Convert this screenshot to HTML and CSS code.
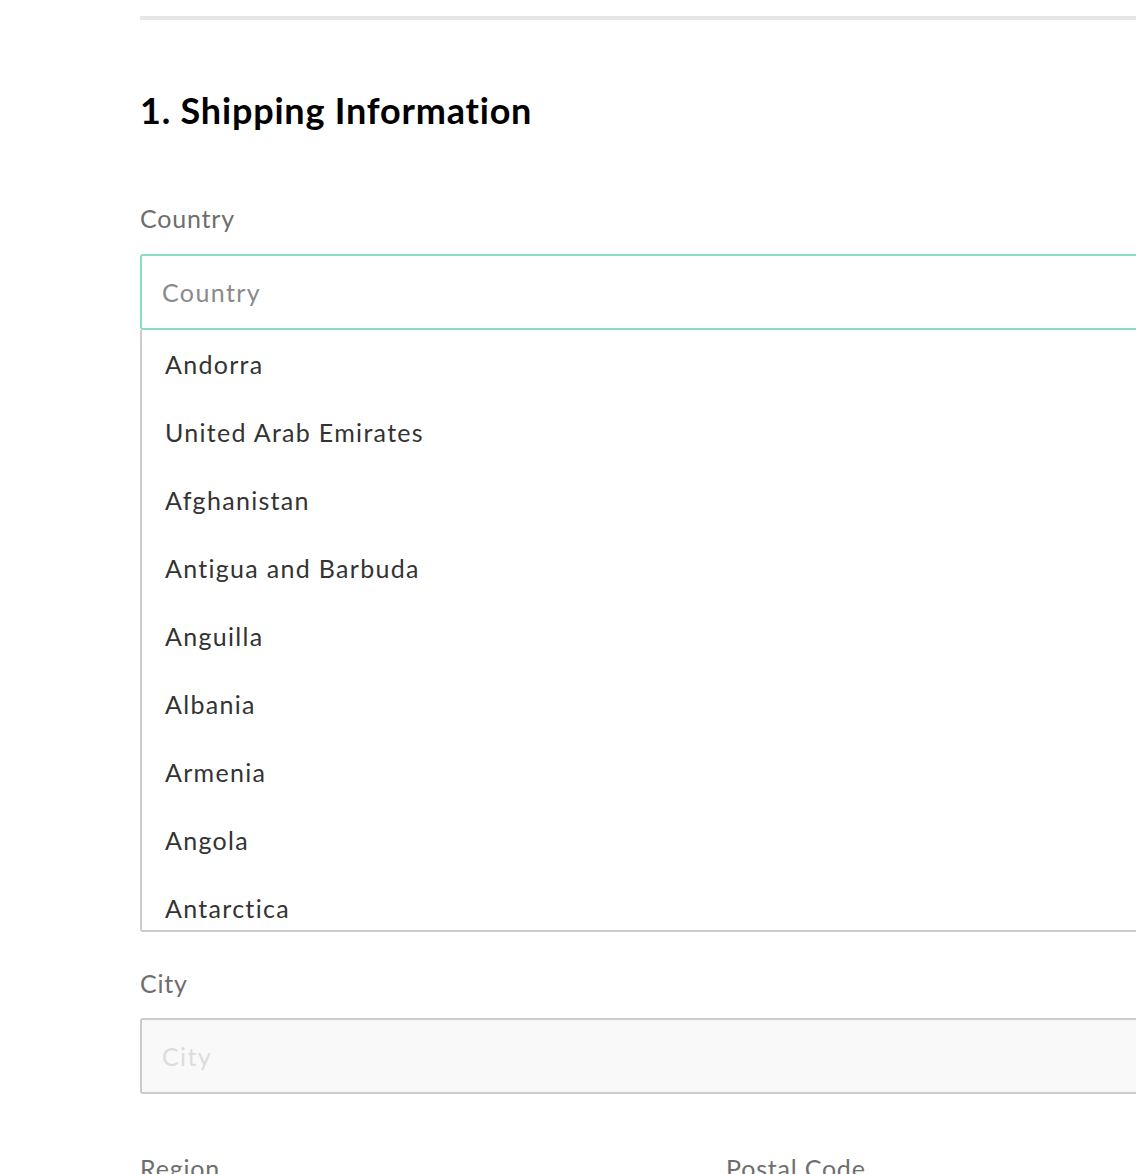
FILE: index.html
```html
<!DOCTYPE html>
<html lang="en">
<head>
<meta charset="utf-8">
<title>Shipping Information</title>
<link rel="stylesheet" href="styles.css">
</head>
<body>
<div class="page">
  <form class="form">
    <h2 class="title">1. Shipping Information</h2>
    <label class="label" for="country">Country</label>
    <div class="combo">
      <input class="input input-active" id="country" type="text" placeholder="Country">
      <ul class="options">
        <li class="option">Andorra</li>
        <li class="option">United Arab Emirates</li>
        <li class="option">Afghanistan</li>
        <li class="option">Antigua and Barbuda</li>
        <li class="option">Anguilla</li>
        <li class="option">Albania</li>
        <li class="option">Armenia</li>
        <li class="option">Angola</li>
        <li class="option">Antarctica</li>
        <li class="option">Argentina</li>
      </ul>
    </div>
    <label class="label label-city" for="city">City</label>
    <input class="input input-disabled" id="city" type="text" placeholder="City" disabled>
    <div class="row">
      <div class="col"><label class="label">Region</label></div>
      <div class="col"><label class="label">Postal Code</label></div>
    </div>
  </form>
</div>
</body>
</html>
```
FILE: styles.css
```css
html, body {
  margin: 0;
  padding: 0;
  background: #ffffff;
  overflow: hidden;
}
body {
  font-family: Lato, "Open Sans", sans-serif;
}
.page {
  padding: 16px 0 0 140px;
}
.form {
  width: 1152px;
  border-top: 4px solid #e6e6e6;
  margin: 0;
}
.title {
  margin: 68px 0 0 0;
  font-size: 36px;
  line-height: 44px;
  font-weight: 700;
  letter-spacing: 0.8px;
  color: #000;
}
.label {
  display: block;
  margin-top: 71px;
  font-size: 25px;
  line-height: 30px;
  letter-spacing: 0.8px;
  color: #6e6e6e;
}
.combo {
  margin-top: 21px;
}
.input {
  display: block;
  box-sizing: border-box;
  width: 100%;
  height: 76px;
  margin: 0;
  padding: 0 20px;
  border: 2px solid #cccccc;
  border-radius: 3px;
  font-family: inherit;
  font-size: 25px;
  letter-spacing: 1.4px;
  color: #333;
  outline: none;
  background: #fff;
}
.input-active {
  border-color: #8adcc5;
}
.input-active::placeholder {
  color: #8a8a8a;
}
.input-disabled {
  margin-top: 20px;
  background: #f9f9f9;
}
.input-disabled::placeholder {
  color: #dcdcdc;
}
.options {
  list-style: none;
  margin: 0;
  padding: 0;
  height: 602px;
  box-sizing: border-box;
  overflow: hidden;
  border: 2px solid #cccccc;
  border-top: none;
  border-radius: 0 0 3px 3px;
}
.option {
  height: 68px;
  line-height: 68px;
  padding-left: 23px;
  font-size: 25px;
  color: #333;
  letter-spacing: 1.3px;
}
.label-city {
  margin-top: 36px;
}
.row {
  display: grid;
  grid-template-columns: 566px 566px;
  column-gap: 20px;
}
.row .label {
  margin-top: 59px;
}
```
